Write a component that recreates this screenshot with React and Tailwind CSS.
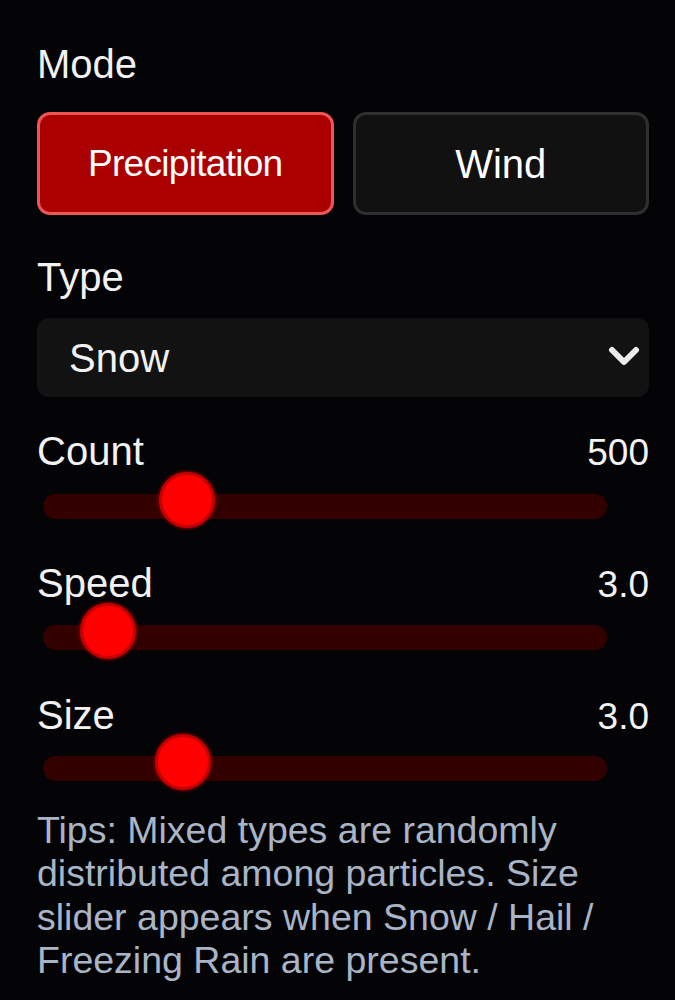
import React from "react";

function Slider({ label, value, left, mt, trackMt }) {
  return (
    <div className={mt}>
      <div className="flex items-baseline justify-between">
        <span className="text-[40px] leading-[48px] text-[#f2f2f2]">{label}</span>
        <span className="text-[37px] leading-[48px] text-[#f2f2f2]">{value}</span>
      </div>
      <div className={`${trackMt} relative ml-[6px] h-[25px] w-[564px] rounded-full bg-[#330000]`}>
        <div
          className={`${left} absolute top-[-22px] h-[56px] w-[56px] rounded-full border-[3px] border-[#c40000] bg-[#ff0000] shadow-[0_0_3px_1px_rgba(140,0,0,0.9)]`}
        />
      </div>
    </div>
  );
}

export default function App() {
  return (
    <div className="min-h-screen bg-[#040406] pl-[37px] pt-[40px] font-['Liberation_Sans',Arial,sans-serif]">
      <div className="flex w-[612px] flex-col">
        <div className="text-[40px] leading-[48px] text-[#f2f2f2]">Mode</div>
        <div className="mt-[24px] grid grid-cols-2 gap-[19px]">
          <button className="flex h-[103px] items-center justify-center rounded-[13px] border-[3px] border-[#ee5656] bg-[#aa0000] text-[37px] tracking-[-0.7px] text-white">
            Precipitation
          </button>
          <button className="flex h-[103px] items-center justify-center rounded-[13px] border-[3px] border-[#2f2f2f] bg-[#111111] text-[40px] text-white">
            Wind
          </button>
        </div>

        <div className="mt-[38px] text-[40px] leading-[48px] text-[#f2f2f2]">Type</div>
        <div className="mt-[17px] flex h-[79px] items-center justify-between rounded-[12px] bg-[#121212] pl-[32px] pr-[9px]">
          <span className="text-[40px] leading-[48px] text-[#f2f2f2]">Snow</span>
          <svg width="32" height="22" viewBox="0 0 32 22" className="mb-[2px]">
            <polyline
              points="4,4 16,16 28,4"
              fill="none"
              stroke="#ececec"
              strokeWidth="6"
              strokeLinecap="round"
              strokeLinejoin="round"
            />
          </svg>
        </div>

        <Slider label="Count" value="500" left="left-[116px]" mt="mt-[30px]" trackMt="mt-[17px]" />
        <Slider label="Speed" value="3.0" left="left-[37px]" mt="mt-[40px]" trackMt="mt-[16px]" />
        <Slider label="Size" value="3.0" left="left-[112px]" mt="mt-[41px]" trackMt="mt-[15px]" />

        <p className="mt-[28px] text-[37.5px] leading-[43.3px] text-[#a9b5c6]">
          Tips: Mixed types are randomly distributed among particles. Size slider appears when Snow / Hail / Freezing Rain are present.
        </p>
      </div>
    </div>
  );
}
